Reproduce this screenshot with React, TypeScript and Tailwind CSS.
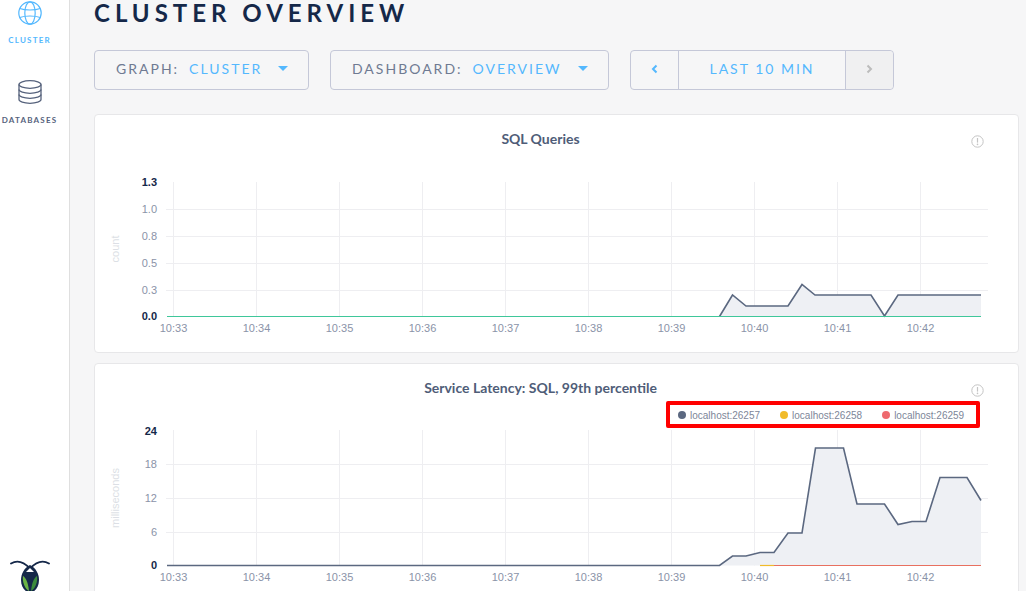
import React from 'react';

// grid + axis positions are in page pixels, the svg viewBox lines them up with the card
const TICKS = ['10:33', '10:34', '10:35', '10:36', '10:37', '10:38', '10:39', '10:40', '10:41', '10:42'];
const TICK_X = [173.5, 256.5, 339.5, 422.5, 505.5, 588.5, 671.5, 754.5, 837.5, 920.5];

type ChartProps = {
  viewTop: number;
  height: number;
  top: number;
  zero: number;
  yLabels: { y: number; label: string }[];
  unit: string;
  unitX: number;
  unitY: number;
  points: number[][];
  children?: React.ReactNode;
};

const Chart = ({ viewTop, height, top, zero, yLabels, unit, unitX, unitY, points, children }: ChartProps) => {
  const line = points.map((p) => p.join(',')).join(' ');
  const last = points[points.length - 1];
  const area = `${points[0][0]},${zero} ${line} ${last[0]},${zero}`;
  const font = '"Liberation Sans", Arial, sans-serif';

  return (
    <svg width={923} height={height} viewBox={`95 ${viewTop} 923 ${height}`} className="block">
      {TICK_X.map((x) => (
        <line key={x} x1={x} x2={x} y1={top} y2={zero} stroke="#eeeef1" strokeWidth={1} />
      ))}
      {yLabels.slice(1, -1).map((t) => (
        <line key={t.y} x1={166} x2={988} y1={t.y} y2={t.y} stroke="#eeeef1" strokeWidth={1} />
      ))}
      {yLabels.map((t, i) => (
        <text
          key={t.label}
          x={157}
          y={t.y + 3.5}
          textAnchor="end"
          fontFamily={font}
          fontSize={11}
          fontWeight={i === 0 || i === yLabels.length - 1 ? 700 : 400}
          fill={i === 0 || i === yLabels.length - 1 ? '#152849' : '#8a93a8'}
        >
          {t.label}
        </text>
      ))}
      <text
        x={unitX}
        y={unitY}
        textAnchor="middle"
        transform={`rotate(-90 ${unitX} ${unitY})`}
        fontFamily={font}
        fontSize={11}
        fill="#dcdfe5"
      >
        {unit}
      </text>
      {TICKS.map((t, i) => (
        <text key={t} x={TICK_X[i]} y={zero + 15} textAnchor="middle" fontFamily={font} fontSize={11} fill="#8a93a8">
          {t}
        </text>
      ))}
      <polygon points={area} fill="#eef0f4" />
      <polyline points={line} fill="none" stroke="#5b6880" strokeWidth={1.6} />
      {children}
    </svg>
  );
};

const InfoIcon = () => (
  <svg width={13} height={13} viewBox="0 0 13 13" className="shrink-0 mt-1">
    <circle cx={6.5} cy={6.5} r={5.7} fill="none" stroke="#c4c4c4" strokeWidth={1} />
    <line x1={6.5} x2={6.5} y1={3} y2={7.6} stroke="#c4c4c4" strokeWidth={1.2} />
    <circle cx={6.5} cy={9.4} r={0.8} fill="#c4c4c4" />
  </svg>
);

const Card = ({ title, className, children }: { title: string; className: string; children: React.ReactNode }) => (
  <div className={`relative bg-white border border-[#e7e7e9] rounded-[4px] ${className}`}>
    <div className="flex items-center h-[48px]">
      <h3 className="w-[876px] pl-[15px] -mt-[2px] text-center text-[14px] font-bold text-[#4f5d78] font-['Lato',sans-serif]">{title}</h3>
      <InfoIcon />
    </div>
    {children}
  </div>
);

const Dropdown = ({ label, value, className, gap }: { label: string; value: string; className: string; gap: string }) => (
  <div className={`h-10 flex items-center border border-[#c5c8d8] rounded-[4px] pl-[21px] pb-[3px] text-[14px] tracking-[2px] font-['Lato',sans-serif] ${className}`}>
    <span className="text-[#6f7a92]">{label}:</span>
    <span className={`${gap} text-[#54b8fe]`}>{value}</span>
    <span className="ml-[16px] w-0 h-0 border-x-[5px] border-x-transparent border-t-[5px] border-t-[#54b8fe]" />
  </div>
);

const LegendItem = ({ color, label }: { color: string; label: string }) => (
  <div className="flex items-center gap-[4px]">
    <span className={`w-2 h-2 rounded-full ${color}`} />
    <span>{label}</span>
  </div>
);

const App = () => {
  return (
    <div className="flex h-[591px] w-[1026px] overflow-hidden bg-[#f6f6f7]">
      <aside className="w-[70px] shrink-0 bg-white border-r border-[#dfdfdf] pr-[10px] flex flex-col items-center font-['Lato',sans-serif]">
        <svg width={24} height={26} viewBox="0 0 24 26" fill="none" stroke="#54b8fe" strokeWidth={1.2} className="shrink-0">
          <circle cx={12} cy={13} r={11.2} />
          <ellipse cx={12} cy={13} rx={5.2} ry={11.2} />
          <path d="M1.800 8.500c5 2 15.400 2 20.400 0M1.800 17.500c5-2 15.400-2 20.400 0" />
        </svg>
        <span className="mt-[9px] text-[8px] leading-[10px] font-bold tracking-[1.2px] text-[#54b8fe]">CLUSTER</span>
        <svg width={24} height={24} viewBox="0 0 24 24" fill="none" stroke="#56627c" strokeWidth={1.3} className="mt-[35px] shrink-0">
          <ellipse cx={12} cy={4.500} rx={11} ry={3.800} />
          <path d="M1 4.500v15c0 2.100 4.900 3.800 11 3.800s11-1.700 11-3.800v-15" />
          <path d="M1 9.500c0 2.100 4.900 3.800 11 3.800s11-1.700 11-3.800M1 14.500c0 2.100 4.900 3.800 11 3.800s11-1.700 11-3.800" />
        </svg>
        <span className="mt-[11px] text-[8px] leading-[10px] font-bold tracking-[1.2px] text-[#56627c]">DATABASES</span>
        <svg width={40} height={34} viewBox="0 0 40 34" className="mt-auto -mb-[2px] shrink-0" fill="none">
          <path d="M1 4.500C6 1.500 13 2 20 9.500 27 2 34 1.500 39 4.500" stroke="#152849" strokeWidth={1.800} strokeLinecap="round" />
          <path d="M20 6c6 3 9 9 9 15 0 7-4 12-9 13-5-1-9-6-9-13 0-6 3-12 9-15z" fill="#152849" />
          <path d="M20 9l4 4h-8z" fill="#fff" />
          <path d="M13 17c3 2 5 6 6 15-4-2-7-9-6-15z" fill="#6bb445" />
          <path d="M27 17c-3 2-5 6-6 15 4-2 7-9 6-15z" fill="#3c8b3c" />
        </svg>
      </aside>

      <main className="flex-1 pl-6 pr-[7px] min-w-0">
        <h1 className="h-[25px] leading-[25px] text-[24px] font-bold tracking-[5px] text-[#152849] font-['Lato',sans-serif]">CLUSTER OVERVIEW</h1>

        <div className="flex gap-[21px] mt-[25px]">
          <Dropdown label="GRAPH" value="CLUSTER" gap="ml-[10px]" className="w-[215px]" />
          <Dropdown label="DASHBOARD" value="OVERVIEW" gap="ml-[10px]" className="w-[279px]" />
          <div className="h-10 w-[264px] flex border border-[#c5c8d8] rounded-[4px] font-['Lato',sans-serif]">
            <div className="w-[48px] pb-[3px] flex items-center justify-center border-r border-[#c5c8d8]">
              <svg width={8} height={10} viewBox="0 0 8 10" fill="none" stroke="#54b8fe" strokeWidth={2}>
                <path d="M5.500 1.500L2 5l3.500 3.500" />
              </svg>
            </div>
            <div className="flex-1 pb-[3px] flex items-center justify-center text-[14px] tracking-[2px] text-[#54b8fe]">LAST 10 MIN</div>
            <div className="w-[48px] pb-[3px] pr-[2px] flex items-center justify-center border-l border-[#c5c8d8] bg-[#f0f0f1] rounded-r-[4px]">
              <svg width={8} height={10} viewBox="0 0 8 10" fill="none" stroke="#bcbcbc" strokeWidth={2}>
                <path d="M2.500 1.500L6 5 2.500 8.500" />
              </svg>
            </div>
          </div>
        </div>

        <Card title="SQL Queries" className="mt-6 h-[239px]">
          <Chart
            viewTop={163}
            height={188}
            top={182}
            zero={316.5}
            unit="count"
            unitX={119}
            unitY={249}
            yLabels={[
              { y: 182.5, label: '1.3' },
              { y: 209.5, label: '1.0' },
              { y: 236.5, label: '0.8' },
              { y: 263.5, label: '0.5' },
              { y: 290.5, label: '0.3' },
              { y: 316.5, label: '0.0' },
            ]}
            points={[[719.5, 316.5], [732.5, 295], [746, 306], [788, 306], [802, 284.5], [815, 295], [871, 295], [884.5, 316], [898, 295], [981, 295]]}
          >
            <line x1={167} x2={981} y1={316.5} y2={316.5} stroke="#3fc79a" strokeWidth={1.2} />
          </Chart>
        </Card>

        <Card title="Service Latency: SQL, 99th percentile" className="mt-[10px] h-[240px]">
          <div className="absolute left-[571px] top-[37px] w-[314px] h-[27px] border-[4px] border-[#ff0000] rounded-[2px] bg-white flex items-center gap-[20px] pl-[8px] pt-[1px] text-[10px] text-[#7d8699] font-['Liberation_Sans',Arial,sans-serif]">
            <LegendItem color="bg-[#5b6880]" label="localhost:26257" />
            <LegendItem color="bg-[#f1bb2a]" label="localhost:26258" />
            <LegendItem color="bg-[#ee6a6f]" label="localhost:26259" />
          </div>
          <Chart
            viewTop={412}
            height={190}
            top={430}
            zero={565.5}
            unit="milliseconds"
            unitX={119}
            unitY={498}
            yLabels={[
              { y: 431, label: '24' },
              { y: 464.5, label: '18' },
              { y: 498.5, label: '12' },
              { y: 532.5, label: '6' },
              { y: 565.5, label: '0' },
            ]}
            points={[[167, 565.5], [719.5, 565.5], [732.5, 556], [746, 556], [760, 552.5], [774, 552.5], [788, 533], [802, 533], [815.5, 448], [843.5, 448], [857, 504], [884.5, 504], [898, 524.5], [912, 521.5], [926, 521.5], [940, 477.5], [967, 477.5], [981, 500.5]]}
          >
            <line x1={760} x2={774} y1={565.5} y2={565.5} stroke="#f1bb2a" strokeWidth={1.2} />
            <line x1={774} x2={981} y1={565.5} y2={565.5} stroke="#e8705f" strokeWidth={1.2} />
          </Chart>
        </Card>
      </main>
    </div>
  );
};

export default App;
